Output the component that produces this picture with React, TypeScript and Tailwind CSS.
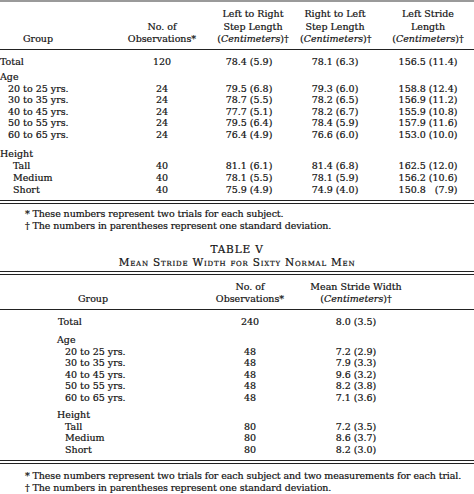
import React from 'react'

type Row = { label: string; n: string; v: string[]; indent?: string }

const topRows: { head?: string; rows: Row[] }[] = [
  { rows: [{ label: 'Total', n: '120', v: ['78.4 (5.9)', '78.1 (6.3)', '156.5 (11.4)'] }] },
  {
    head: 'Age',
    rows: [
      { label: '20 to 25 yrs.', n: '24', v: ['79.5 (6.8)', '79.3 (6.0)', '158.8 (12.4)'], indent: 'pl-[8px]' },
      { label: '30 to 35 yrs.', n: '24', v: ['78.7 (5.5)', '78.2 (6.5)', '156.9 (11.2)'], indent: 'pl-[8px]' },
      { label: '40 to 45 yrs.', n: '24', v: ['77.7 (5.1)', '78.2 (6.7)', '155.9 (10.8)'], indent: 'pl-[8px]' },
      { label: '50 to 55 yrs.', n: '24', v: ['79.5 (6.4)', '78.4 (5.9)', '157.9 (11.6)'], indent: 'pl-[8px]' },
      { label: '60 to 65 yrs.', n: '24', v: ['76.4 (4.9)', '76.6 (6.0)', '153.0 (10.0)'], indent: 'pl-[8px]' },
    ],
  },
  {
    head: 'Height',
    rows: [
      { label: 'Tall', n: '40', v: ['81.1 (6.1)', '81.4 (6.8)', '162.5 (12.0)'], indent: 'pl-[13px]' },
      { label: 'Medium', n: '40', v: ['78.1 (5.5)', '78.1 (5.9)', '156.2 (10.6)'], indent: 'pl-[13px]' },
      { label: 'Short', n: '40', v: ['75.9 (4.9)', '74.9 (4.0)', '150.8 \u2007(7.9)'], indent: 'pl-[13px]' },
    ],
  },
]

const bottomRows: { head?: string; rows: Row[] }[] = [
  { rows: [{ label: 'Total', n: '240', v: ['8.0 (3.5)'] }] },
  {
    head: 'Age',
    rows: [
      { label: '20 to 25 yrs.', n: '48', v: ['7.2 (2.9)'] },
      { label: '30 to 35 yrs.', n: '48', v: ['7.9 (3.3)'] },
      { label: '40 to 45 yrs.', n: '48', v: ['9.6 (3.2)'] },
      { label: '50 to 55 yrs.', n: '48', v: ['8.2 (3.8)'] },
      { label: '60 to 65 yrs.', n: '48', v: ['7.1 (3.6)'] },
    ],
  },
  {
    head: 'Height',
    rows: [
      { label: 'Tall', n: '80', v: ['7.2 (3.5)'] },
      { label: 'Medium', n: '80', v: ['8.6 (3.7)'] },
      { label: 'Short', n: '80', v: ['8.2 (3.0)'] },
    ],
  },
]

function Cm() {
  return (
    <span>
      (<i>Centimeters</i>)†
    </span>
  )
}

export default function App() {
  const topCols = 'grid grid-cols-[118px_88px_94px_70px_104px]'
  const botCols = 'grid grid-cols-[200px_100px_112px]'

  return (
    <div className="w-[474px] h-[494px] overflow-hidden bg-white text-[#111] font-['DejaVu_Serif',serif] text-[9.5px] [-webkit-text-stroke:0.2px_#111]">
      {/* end of table IV */}
      <div className="h-[2px] bg-[#9a9a9a]" />
      <div className={`${topCols} items-end pt-[6px] pb-[3px] leading-[12.5px] border-b border-[#222]`}>
        <div className="pl-[23px]">Group</div>
        <div className="text-center">
          No. of
          <br />
          Observations*
        </div>
        <div className="text-center">
          Left to Right
          <br />
          Step Length
          <br />
          <Cm />
        </div>
        <div className="text-center">
          Right to Left
          <br />
          Step Length
          <br />
          <Cm />
        </div>
        <div className="text-center pl-[12px]">
          Left Stride
          <br />
          Length
          <br />
          <Cm />
        </div>
      </div>

      <div className="pt-[6px] pb-[4.5px] leading-[11.5px] border-b-4 border-double border-[#222]">
        {topRows.map((g, gi) => (
          <div key={gi} className={gi === 1 ? 'mt-[4px]' : gi === 2 ? 'mt-[7.5px] leading-[12px]' : ''}>
            {g.head && <div>{g.head}</div>}
            {g.rows.map(r => (
              <div key={r.label} className={topCols}>
                <div className={r.indent}>{r.label}</div>
                <div className="text-center">{r.n}</div>
                <div className="text-center whitespace-pre pr-[8px]">{r.v[0]}</div>
                <div className="text-center whitespace-pre">{r.v[1]}</div>
                <div className="text-center whitespace-pre pl-[12px]">{r.v[2]}</div>
              </div>
            ))}
          </div>
        ))}
      </div>

      <div className="pt-[4px] pl-[25px] leading-[12px] tracking-[-0.01em]">
        <div>* These numbers represent two trials for each subject.</div>
        <div>† The numbers in parentheses represent one standard deviation.</div>
      </div>

      {/* TABLE V */}
      <div className="mt-[11px] pb-[2px] text-center leading-[13px] text-[10.5px] border-b-4 border-double border-[#222]">
        <div className="tracking-[0.08em]">TABLE V</div>
        <div className="[font-variant:small-caps] tracking-[0.075em]">Mean Stride Width for Sixty Normal Men</div>
      </div>

      <div className={`${botCols} items-end pt-[6px] pb-[4px] leading-[12px] border-b border-[#222]`}>
        <div className="pl-[78px]">Group</div>
        <div className="text-center">
          No. of
          <br />
          Observations*
        </div>
        <div className="text-center">
          Mean Stride Width
          <br />
          <Cm />
        </div>
      </div>

      <div className="pt-[6px] pb-[5px] leading-[11.5px] border-b-4 border-double border-[#222]">
        {bottomRows.map((g, gi) => (
          <div key={gi} className={gi === 1 ? 'mt-[6.5px]' : gi === 2 ? 'mt-[6px]' : ''}>
            {g.head && <div className="pl-[57px]">{g.head}</div>}
            {g.rows.map(r => (
              <div key={r.label} className={botCols}>
                <div className={g.head ? 'pl-[65px]' : 'pl-[58px]'}>{r.label}</div>
                <div className="text-center">{r.n}</div>
                <div className="text-center whitespace-pre">{r.v[0]}</div>
              </div>
            ))}
          </div>
        ))}
      </div>

      <div className="pt-[6px] pl-[25px] leading-[11.5px] tracking-[-0.01em]">
        <div>* These numbers represent two trials for each subject and two measurements for each trial.</div>
        <div>† The numbers in parentheses represent one standard deviation.</div>
      </div>
    </div>
  )
}
